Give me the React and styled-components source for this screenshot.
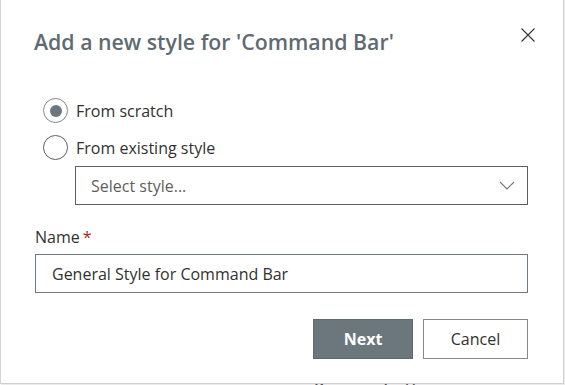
import React from "react";
import styled, { createGlobalStyle } from "styled-components";

const Global = createGlobalStyle`
  html, body { margin: 0; padding: 0; background: #ffffff; }
  body { width: 565px; height: 385px; overflow: hidden; font-family: "Open Sans", "Noto Sans", sans-serif; }
  * { box-sizing: border-box; }
`;

const Page = styled.div`
  position: relative;
  width: 565px;
  height: 385px;
  background: #ffffff;
  overflow: hidden;
`;

const BehindText = styled.div`
  padding: 377px 0 0 314px;
  font-size: 16px;
  font-weight: 600;
  color: #555;
  letter-spacing: 0.5px;
`;

const Dialog = styled.div`
  position: absolute;
  left: 0;
  top: -4px;
  width: 564px;
  height: 388px;
  background: #ffffff;
  border-left: 1px solid #d4d4d4;
  border-right: 1px solid #cfcfcf;
  border-bottom: 1px solid #cfcfcf;
  box-shadow: 1px 1px 1px rgba(0,0,0,0.08);
  padding: 4px 35px 0 34px;
  display: flex;
  flex-direction: column;
`;

const Header = styled.div`
  display: flex;
  align-items: flex-start;
  justify-content: space-between;
  padding-top: 28px;
  height: 98px;
`;

const Title = styled.h1`
  margin: 0 0 0 -1px;
  font-size: 21.3px;
  font-weight: 600;
  color: #5f6b72;
  line-height: 28px;
`;

const CloseButton = styled.button`
  border: 0;
  background: transparent;
  padding: 0;
  width: 16px;
  height: 16px;
  margin: -1px -8px 0 0;
  display: flex;
  cursor: pointer;
`;

const RadioGroup = styled.div`
  display: flex;
  flex-direction: column;
  gap: 12px;
  padding-left: 8px;
`;

const RadioRow = styled.label`
  display: flex;
  align-items: center;
  gap: 8px;
  height: 25px;
  font-size: 16px;
  color: #323130;
`;

const RadioCircle = styled.span`
  width: 25px;
  height: 25px;
  border-radius: 50%;
  border: 1px solid ${p => (p.$checked ? "#7d8a90" : "#5e5e5e")};
  display: flex;
  align-items: center;
  justify-content: center;
  flex-shrink: 0;
  &::after {
    content: "";
    width: 12px;
    height: 12px;
    border-radius: 50%;
    background: ${p => (p.$checked ? "#6b797f" : "transparent")};
  }
`;

const Select = styled.div`
  margin: 6px 0 0 40px;
  height: 39px;
  border: 1px solid #5e5e5e;
  display: flex;
  align-items: center;
  justify-content: space-between;
  padding: 0 12px 0 15px;
  font-size: 16px;
  color: #605e5c;
`;

const Field = styled.div`
  margin-top: 21px;
  display: flex;
  flex-direction: column;
  gap: 6px;
`;

const Label = styled.div`
  font-size: 16px;
  color: #323130;
  line-height: 22px;
  & span { color: #a4262c; margin-left: 3px; }
`;

const Input = styled.div`
  height: 39px;
  border: 1px solid #6d7a80;
  display: flex;
  align-items: center;
  padding: 0 16px;
  font-size: 16px;
  color: #323130;
`;

const Footer = styled.div`
  display: flex;
  justify-content: flex-end;
  gap: 10px;
  margin-top: 26px;
`;

const Button = styled.button`
  height: 40px;
  width: ${p => p.$w}px;
  font-family: "Open Sans", "Noto Sans", sans-serif;
  font-size: 16px;
  font-weight: ${p => (p.$primary ? 700 : 400)};
  color: ${p => (p.$primary ? "#ffffff" : "#323130")};
  background: ${p => (p.$primary ? "#6b777c" : "#ffffff")};
  border: 1px solid ${p => (p.$primary ? "#5f6a6f" : "#8a8886")};
  padding: 0;
`;

export default function App() {
  return (
    <Page>
      <Global />
      <BehindText>Primary buttons</BehindText>
      <Dialog>
        <Header>
          <Title>Add a new style for 'Command Bar'</Title>
          <CloseButton aria-label="Close">
            <svg width="16" height="16" viewBox="0 0 16 16">
              <path d="M1.5 1.5 L14.5 14.5 M14.5 1.5 L1.5 14.5" stroke="#333" strokeWidth="1.1" fill="none" />
            </svg>
          </CloseButton>
        </Header>
        <RadioGroup>
          <RadioRow>
            <RadioCircle $checked />
            From scratch
          </RadioRow>
          <RadioRow>
            <RadioCircle />
            From existing style
          </RadioRow>
        </RadioGroup>
        <Select>
          Select style...
          <svg width="16" height="9" viewBox="0 0 16 9">
            <path d="M1 1 L8 8 L15 1" stroke="#777" strokeWidth="1.1" fill="none" />
          </svg>
        </Select>
        <Field>
          <Label>Name<span>*</span></Label>
          <Input>General Style for Command Bar</Input>
        </Field>
        <Footer>
          <Button $primary $w={100}>Next</Button>
          <Button $w={105}>Cancel</Button>
        </Footer>
      </Dialog>
    </Page>
  );
}
